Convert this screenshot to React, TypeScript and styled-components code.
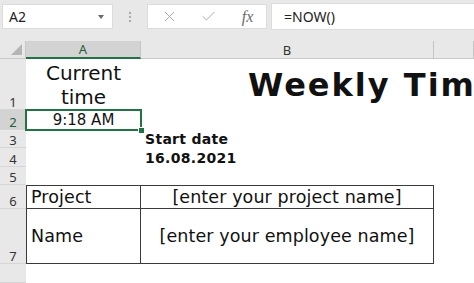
import styled, { createGlobalStyle } from "styled-components";
import { X, Check, EllipsisVertical } from "lucide-react";

const GlobalStyle = createGlobalStyle`
  html, body {
    margin: 0;
    padding: 0;
    background: #e8e8e8;
    overflow: hidden;
  }
  #root {
    width: 474px;
    height: 283px;
  }
`;

const Window = styled.div`
  display: flex;
  flex-direction: column;
  width: 474px;
  height: 283px;
  overflow: hidden;
  font-family: "Noto Sans", "Open Sans", sans-serif;
`;

/* formula bar */
const Toolbar = styled.div`
  display: flex;
  align-items: center;
  height: 25px;
  padding: 4px 0 12px 2px;
  background: #e8e8e8;
`;

const NameBox = styled.div`
  display: flex;
  align-items: center;
  justify-content: space-between;
  box-sizing: border-box;
  width: 111px;
  height: 25px;
  padding: 0 8px 0 6px;
  background: #fff;
  border: 1px solid #dcdcdc;
  font-size: 14px;
  color: #222;
`;

const Caret = styled.span`
  width: 0;
  height: 0;
  border-left: 3.5px solid transparent;
  border-right: 3.5px solid transparent;
  border-top: 4px solid #6a6a6a;
`;

const Grip = styled.div`
  display: flex;
  justify-content: center;
  width: 34px;
  color: #a9a9a9;
`;

const ButtonGroup = styled.div`
  display: grid;
  grid-template-columns: repeat(3, 39px);
  box-sizing: border-box;
  width: 120px;
  height: 25px;
  padding-left: 2px;
  background: #fff;
  border: 1px solid #dcdcdc;
`;

const ToolButton = styled.div`
  display: flex;
  align-items: center;
  justify-content: center;
  color: #a4a4a4;
`;

const Fx = styled.span`
  font-family: "Liberation Serif", serif;
  font-style: italic;
  font-size: 16px;
  color: #6b6b6b;
`;

const FormulaInput = styled.div`
  flex: 1;
  display: flex;
  align-items: center;
  height: 25px;
  margin-left: 4px;
  padding-left: 12px;
  background: #fff;
  border: 1px solid #dcdcdc;
  border-right: none;
  font-size: 14px;
  color: #222;
`;

/* sheet */
const Sheet = styled.div`
  flex: 1;
  display: grid;
  grid-template-columns: 26px 115px 293px 1fr;
  grid-template-rows: 18px 51px 20px 18px 19px 18px 24px 55px 1fr;
  background: #fff;
  font-family: "DejaVu Sans", Verdana, sans-serif;
  color: #111;
`;

const Corner = styled.div`
  display: flex;
  align-items: flex-end;
  justify-content: flex-end;
  padding: 0 3px 3px 0;
  background: #e8e8e8;
  border-right: 1px solid #c8c8c8;
  border-bottom: 1px solid #c8c8c8;
`;

const ColHeader = styled.div<{ $active?: boolean }>`
  display: flex;
  align-items: center;
  justify-content: center;
  box-sizing: border-box;
  font-family: "Noto Sans", "Open Sans", sans-serif;
  font-size: 13px;
  background: ${(p) => (p.$active ? "#d3d3d3" : "#e8e8e8")};
  color: ${(p) => (p.$active ? "#1f5e3b" : "#333")};
  border-right: 1px solid #c4c4c4;
  border-bottom: ${(p) => (p.$active ? "2px solid #217346" : "1px solid #c8c8c8")};
`;

const RowHeader = styled.div<{ $active?: boolean }>`
  display: flex;
  align-items: flex-end;
  justify-content: center;
  box-sizing: border-box;
  font-family: "Noto Sans", "Open Sans", sans-serif;
  font-size: 13px;
  line-height: 14px;
  background: ${(p) => (p.$active ? "#d3d3d3" : "#e8e8e8")};
  color: ${(p) => (p.$active ? "#1f5e3b" : "#333")};
  border-bottom: 1px solid #d6d6d6;
`;

const Cell = styled.div<{
  $align?: "left" | "center";
  $valign?: "end" | "center";
  $size?: number;
  $bold?: boolean;
}>`
  display: flex;
  flex-direction: column;
  justify-content: ${(p) => (p.$valign === "center" ? "center" : "flex-end")};
  align-items: ${(p) => (p.$align === "center" ? "center" : "flex-start")};
  text-align: ${(p) => p.$align ?? "left"};
  padding: 0 4px;
  font-size: ${(p) => p.$size ?? 15}px;
  font-weight: ${(p) => (p.$bold ? 700 : 400)};
  white-space: nowrap;
  min-width: 0;
  position: relative;
`;

const Stacked = styled.div`
  font-size: 20px;
  line-height: 24px;
  padding-bottom: 1px;
`;

const Title = styled.div`
  padding: 0 0 7px 103px;
  font-size: 32px;
  font-weight: 700;
  line-height: 36px;
  letter-spacing: 2px;
`;

const BoldLine = styled.div`
  padding-bottom: 1px;
  letter-spacing: 0.3px;
`;

const Selected = styled(Cell)`
  outline: 2px solid #217346;
  outline-offset: -1px;
`;

const FillHandle = styled.span`
  position: absolute;
  right: -4px;
  bottom: -4px;
  width: 5px;
  height: 5px;
  background: #217346;
  border: 1px solid #fff;
  z-index: 2;
`;

const Boxed = styled(Cell)<{ $top?: boolean; $left?: boolean }>`
  border-bottom: 1px solid #3a3a3a;
  border-right: 1px solid #3a3a3a;
  border-top: ${(p) => (p.$top ? "1px solid #3a3a3a" : "none")};
  border-left: ${(p) => (p.$left ? "1px solid #3a3a3a" : "none")};
  font-size: 17.5px;
  letter-spacing: 0.1px;
`;

const Empty = styled.div``;

export default function App() {
  return (
    <>
      <GlobalStyle />
      <Window>
        <Toolbar>
          <NameBox>
            A2
            <Caret />
          </NameBox>
          <Grip>
            <EllipsisVertical size={14} strokeWidth={2} />
          </Grip>
          <ButtonGroup>
            <ToolButton>
              <X size={17} strokeWidth={1.3} />
            </ToolButton>
            <ToolButton>
              <Check size={17} strokeWidth={1.3} />
            </ToolButton>
            <ToolButton>
              <Fx>fx</Fx>
            </ToolButton>
          </ButtonGroup>
          <FormulaInput>=NOW()</FormulaInput>
        </Toolbar>

        <Sheet>
          <Corner>
            <svg width="11" height="11" viewBox="0 0 11 11">
              <polygon points="11,0 11,11 0,11" fill="#b5b5b5" />
            </svg>
          </Corner>
          <ColHeader $active>A</ColHeader>
          <ColHeader>B</ColHeader>
          <ColHeader />

          <RowHeader>1</RowHeader>
          <Cell $align="center">
            <Stacked>
              Current
              <br />
              time
            </Stacked>
          </Cell>
          <Cell>
            <Title>Weekly Timesheet</Title>
          </Cell>
          <Empty />

          <RowHeader $active>2</RowHeader>
          <Selected $align="center" $valign="center" $size={15}>
            9:18 AM
            <FillHandle />
          </Selected>
          <Empty />
          <Empty />

          <RowHeader>3</RowHeader>
          <Empty />
          <Cell $bold $size={14}>
            <BoldLine>Start date</BoldLine>
          </Cell>
          <Empty />

          <RowHeader>4</RowHeader>
          <Empty />
          <Cell $bold $size={14}>
            <BoldLine>16.08.2021</BoldLine>
          </Cell>
          <Empty />

          <RowHeader>5</RowHeader>
          <Empty />
          <Empty />
          <Empty />

          <RowHeader>6</RowHeader>
          <Boxed $top $left $valign="center">Project</Boxed>
          <Boxed $top $align="center" $valign="center">
            [enter your project name]
          </Boxed>
          <Empty />

          <RowHeader>7</RowHeader>
          <Boxed $left $valign="center">Name</Boxed>
          <Boxed $align="center" $valign="center">
            [enter your employee name]
          </Boxed>
          <Empty />

          <RowHeader />
          <Empty />
          <Empty />
          <Empty />
        </Sheet>
      </Window>
    </>
  );
}
